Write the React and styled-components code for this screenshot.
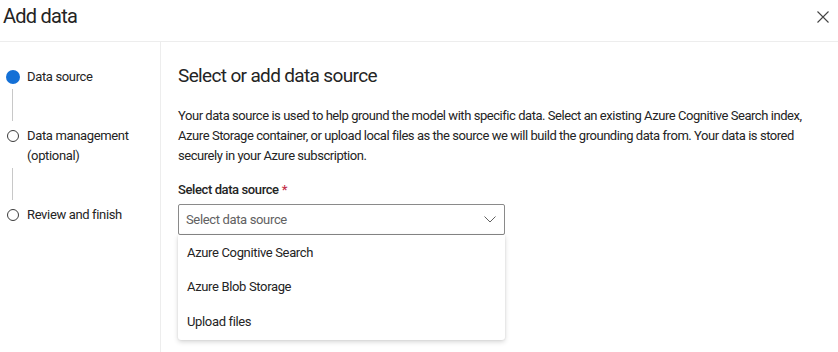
import React from "react";
import styled, { createGlobalStyle } from "styled-components";

const Global = createGlobalStyle`
  html, body { margin: 0; padding: 0; background: #ffffff; }
  body {
    font-family: Roboto, "Liberation Sans", sans-serif;
    color: #242424;
    -webkit-font-smoothing: antialiased;
  }
  * { box-sizing: border-box; }
`;

const Dialog = styled.div`
  width: 838px;
  height: 352px;
  display: flex;
  flex-direction: column;
  overflow: hidden;
  background: #fff;
`;

const Header = styled.header`
  height: 42px;
  flex: 0 0 42px;
  display: flex;
  align-items: flex-start;
  justify-content: space-between;
  padding: 3px 9px 0 3px;
  border-bottom: 1px solid #ededed;
`;

const Title = styled.h1`
  margin: 0;
  font-size: 20px;
  font-weight: 400;
  letter-spacing: -0.75px;
  line-height: 26px;
  color: #242424;
`;

const CloseButton = styled.button`
  border: 0;
  background: transparent;
  padding: 0;
  margin-top: 7px;
  width: 13px;
  height: 13px;
  display: flex;
  align-items: center;
  justify-content: center;
  color: #444;
  cursor: pointer;
`;

const Body = styled.div`
  flex: 1;
  display: flex;
  min-height: 0;
`;

const Sidebar = styled.nav`
  width: 161px;
  flex: 0 0 161px;
  border-right: 1px solid #ededed;
  padding: 25px 0 0 6px;
  display: flex;
  flex-direction: column;
`;

const Step = styled.div`
  display: flex;
  align-items: flex-start;
`;

const StepMarker = styled.span`
  flex: 0 0 14px;
  width: 14px;
  height: 20px;
  display: flex;
  align-items: center;
  justify-content: center;
  margin-right: 7px;
`;

const Dot = styled.span`
  display: block;
  width: ${p => (p.$active ? 14 : 12)}px;
  height: ${p => (p.$active ? 14 : 12)}px;
  border-radius: 50%;
  background: ${p => (p.$active ? "#1470d6" : "transparent")};
  border: ${p => (p.$active ? "none" : "1.4px solid #3b3b3b")};
`;

const StepLabel = styled.span`
  font-size: 13px;
  line-height: 20px;
  letter-spacing: -0.35px;
  color: #242424;
`;

const Connector = styled.span`
  display: block;
  width: 1px;
  height: ${p => p.$h}px;
  margin: 2px 0 5px 6px;
  background: #c8c8c8;
`;

const Main = styled.main`
  flex: 1;
  padding: 22px 0 0 17px;
  display: flex;
  flex-direction: column;
`;

const SectionTitle = styled.h2`
  margin: 0;
  font-size: 19px;
  font-weight: 400;
  letter-spacing: -0.65px;
  line-height: 24px;
  color: #242424;
`;

const Description = styled.p`
  margin: 18px 0 0;
  max-width: 640px;
  font-size: 13px;
  line-height: 20px;
  letter-spacing: -0.45px;
  color: #242424;
`;

const FieldLabel = styled.label`
  margin-top: 14px;
  font-size: 13px;
  font-weight: 500;
  line-height: 20px;
  letter-spacing: -0.4px;
  color: #242424;
`;

const Required = styled.span`
  color: #c4314b;
  margin-left: 3px;
`;

const Field = styled.div`
  position: relative;
  width: 327px;
  margin-top: 4px;
`;

const SelectBox = styled.div`
  height: 31px;
  border: 1px solid #8a8a8a;
  border-radius: 2px;
  display: flex;
  align-items: center;
  justify-content: space-between;
  padding: 0 8px 0 7px;
  font-size: 13px;
  letter-spacing: -0.35px;
  color: #616161;
`;

const Menu = styled.ul`
  position: absolute;
  left: 0;
  right: 0;
  top: 31px;
  margin: 0;
  padding: 0 0 1px;
  list-style: none;
  background: #fff;
  border-radius: 0 0 3px 3px;
  box-shadow: 0 2px 5px rgba(0, 0, 0, 0.16), 0 0 2px rgba(0, 0, 0, 0.1);
`;

const MenuItem = styled.li`
  height: 34.5px;
  display: flex;
  align-items: center;
  padding-left: 9px;
  font-size: 13px;
  letter-spacing: -0.35px;
  color: #242424;
`;

const steps = [
  { label: "Data source", active: true },
  { label: <>Data management<br />(optional)</> },
  { label: "Review and finish" },
];

const menuOptions = ["Azure Cognitive Search", "Azure Blob Storage", "Upload files"];

export default function App() {
  return (
    <>
      <Global />
      <Dialog>
        <Header>
          <Title>Add data</Title>
          <CloseButton aria-label="Close">
            <svg width="12" height="12" viewBox="0 0 12 12" fill="none">
              <path d="M0.5 0.5 L11.5 11.5 M11.5 0.5 L0.5 11.5" stroke="#444" strokeWidth="1.1" />
            </svg>
          </CloseButton>
        </Header>
        <Body>
          <Sidebar>
            <Step>
              <StepMarker><Dot $active /></StepMarker>
              <StepLabel>{steps[0].label}</StepLabel>
            </Step>
            <Connector $h={32} />
            <Step>
              <StepMarker><Dot /></StepMarker>
              <StepLabel>{steps[1].label}</StepLabel>
            </Step>
            <Connector $h={32} />
            <Step>
              <StepMarker><Dot /></StepMarker>
              <StepLabel>{steps[2].label}</StepLabel>
            </Step>
          </Sidebar>
          <Main>
            <SectionTitle>Select or add data source</SectionTitle>
            <Description>
              Your data source is used to help ground the model with specific data. Select an existing Azure Cognitive Search index, Azure Storage container, or upload local files as the source we will build the grounding data from. Your data is stored securely in your Azure subscription.
            </Description>
            <FieldLabel>
              Select data source<Required>*</Required>
            </FieldLabel>
            <Field>
              <SelectBox>
                <span>Select data source</span>
                <svg width="12" height="7" viewBox="0 0 12 7" fill="none">
                  <path d="M0.5 0.5 L6 6 L11.5 0.5" stroke="#616161" strokeWidth="1" />
                </svg>
              </SelectBox>
              <Menu>
                {menuOptions.map(o => <MenuItem key={o}>{o}</MenuItem>)}
              </Menu>
            </Field>
          </Main>
        </Body>
      </Dialog>
    </>
  );
}
